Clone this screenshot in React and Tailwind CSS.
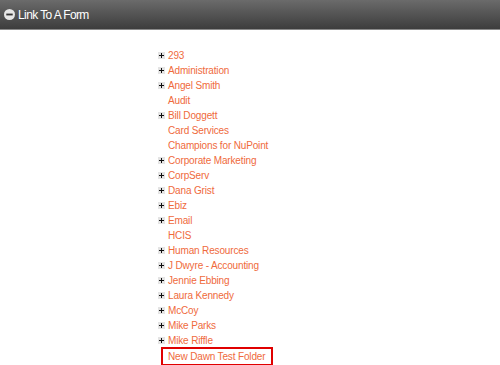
import React from "react";

const folders = [
  { name: "293", plus: true },
  { name: "Administration", plus: true },
  { name: "Angel Smith", plus: true },
  { name: "Audit", plus: false },
  { name: "Bill Doggett", plus: true },
  { name: "Card Services", plus: false },
  { name: "Champions for NuPoint", plus: false },
  { name: "Corporate Marketing", plus: true },
  { name: "CorpServ", plus: true },
  { name: "Dana Grist", plus: true },
  { name: "Ebiz", plus: true },
  { name: "Email", plus: true },
  { name: "HCIS", plus: false },
  { name: "Human Resources", plus: true },
  { name: "J Dwyre - Accounting", plus: true },
  { name: "Jennie Ebbing", plus: true },
  { name: "Laura Kennedy", plus: true },
  { name: "McCoy", plus: true },
  { name: "Mike Parks", plus: true },
  { name: "Mike Riffle", plus: true },
];

const PlusIcon = () => (
  <svg width="7" height="7" viewBox="0 0 7 7" className="shrink-0">
    <rect x="0" y="0" width="7" height="7" fill="#e4e4e4" />
    <rect x="3" y="1" width="1" height="5" fill="#111" />
    <rect x="1" y="3" width="5" height="1" fill="#111" />
  </svg>
);

const App = () => {
  return (
    <div className="w-[500px] h-[365px] overflow-hidden bg-white" style={{ fontFamily: "'Liberation Sans', Arial, sans-serif" }}>
      {/* Header bar */}
      <div className="h-[30px] flex items-center gap-[3px] pl-[4px] bg-gradient-to-b from-[#6b6b6b] to-[#3d3d3d] border-b border-[#8a8a8a]">
        <svg width="11" height="11" viewBox="0 0 12 12">
          <circle cx="6" cy="6" r="6" fill="#e6e6e6" />
          <rect x="2.5" y="5" width="7" height="2" fill="#333" />
        </svg>
        <span className="text-white text-[12px] tracking-[-0.6px]">Link To A Form</span>
      </div>

      {/* Folder list */}
      <div className="pl-[158px] pt-[18px] text-[10px] tracking-[-0.15px] text-[#ef6a3c]">
        {folders.map((f) => (
          <div key={f.name} className="h-[15px] flex items-center">
            <div className="w-[10px] flex">{f.plus && <PlusIcon />}</div>
            <span>{f.name}</span>
          </div>
        ))}
        <div className="h-[19px] -mt-[1px] ml-[3px] w-[112px] border-2 border-[#e00000] flex items-center pl-[5px]">
          New Dawn Test Folder
        </div>
      </div>
    </div>
  );
};

export default App;
